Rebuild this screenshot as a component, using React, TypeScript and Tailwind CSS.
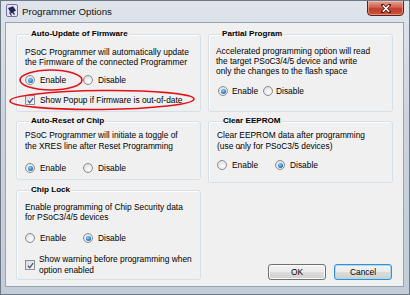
import React from "react";

const FONT = "font-['Liberation_Sans',Arial,sans-serif]";

function Radio({ checked }: { checked?: boolean }) {
    return (
        <span className="flex h-[10px] w-[10px] shrink-0 items-center justify-center rounded-full border border-[#8c8c8c] bg-[radial-gradient(circle_at_60%_65%,#fdfdfd,#e2e2e2_70%,#cfcfcf)]">
            {checked && (
                <span className="h-[5px] w-[5px] rounded-full bg-[radial-gradient(circle_at_40%_35%,#8fd3fb,#2b82cf_55%,#124b8c)]" />
            )}
        </span>
    );
}

function Check() {
    return (
        <span className="flex h-[10px] w-[10px] shrink-0 items-center justify-center border border-[#8e8f8f] bg-[linear-gradient(135deg,#d8d8d8,#f7f7f7)]">
            <svg viewBox="0 0 8 8" className="h-[7px] w-[7px]">
                <path d="M1 4.2 L3.1 6.6 L7 1.2" stroke="#3b4f91" strokeWidth="1.4" fill="none" />
            </svg>
        </span>
    );
}

function Option({ checked, label, width }: { checked?: boolean; label: string; width: string }) {
    return (
        <div className={`flex items-center gap-[5px] ${width}`}>
            <Radio checked={checked} />
            <span>{label}</span>
        </div>
    );
}

function Group({ title, className, children }: { title: string; className: string; children: React.ReactNode }) {
    return (
        <div className={`flex flex-col rounded-[3px] border border-[#d5dfe5] shadow-[inset_1px_1px_0_#ffffff] ${className}`}>
            <div className="-mt-[6px] ml-[5px] w-fit bg-[#f0f0f0] px-[1px] text-[8.1px] font-bold leading-[10px]">{title}</div>
            {children}
        </div>
    );
}

export default function App() {
    return (
        <div className={`relative flex h-[295px] w-[410px] flex-col overflow-hidden border border-[#6c7a88] bg-[linear-gradient(#dfe5eb,#cbd4dd_40%,#c3cdd7)] text-[8.4px] text-black ${FONT}`}>
            {/* Title bar */}
            <div className="flex h-[21px] shrink-0 items-start">
                <svg width="12" height="13" viewBox="0 0 12 13" className="ml-[5px] mt-[3px]">
                    <rect x="0.5" y="0.5" width="11" height="12" rx="1.5" fill="#e6e3f4" stroke="#77729f" />
                    <path d="M2 4 L7 2.2 L10 6.5 L5 9.5 Z" fill="#1f2650" />
                    <path d="M3.5 8.5 L5.5 11.5 M6 7.5 L8.5 10.5" stroke="#1f2650" strokeWidth="1.2" />
                </svg>
                <span className="ml-[4px] mt-[5px] text-[9.7px] leading-[12px] text-[#111]">Programmer Options</span>
                <div className="ml-auto mr-[5px] -mt-px flex h-[16px] w-[37px] items-center justify-center rounded-b-[4px] border border-[#5e2019] bg-[linear-gradient(#e3a496,#d0604c_45%,#c23d29_55%,#c9543c)] shadow-[inset_0_0_0_1px_rgba(255,220,210,0.45)]">
                    <svg width="10" height="9" viewBox="0 0 10 9">
                        <path d="M1.5 1 L8.5 8 M8.5 1 L1.5 8" stroke="#4b1510" strokeWidth="3" strokeLinecap="square" />
                        <path d="M1.8 1.3 L8.2 7.7 M8.2 1.3 L1.8 7.7" stroke="#ffffff" strokeWidth="1.6" />
                    </svg>
                </div>
            </div>

            {/* Client area */}
            <div className="ml-[4px] mr-[5px] mb-[7px] flex flex-1 gap-[7px] border border-[#97a4b1] bg-[#f0f0f0] px-[10px] pt-[11px] pb-[6px]">
                {/* Left column */}
                <div className="flex w-[185px] flex-col">
                    <Group title="Auto-Update of Firmware" className="h-[78px] pl-[8px]">
                        <p className="mt-[8px] leading-[10px]">
                            PSoC Programmer will automatically update<br />
                            the Firmware of the connected Programmer
                        </p>
                        <div className="mt-[8px] flex h-[10px] items-center">
                            <Option checked label="Enable" width="w-[58px]" />
                            <Option label="Disable" width="" />
                        </div>
                        <div className="mt-[10px] flex h-[10px] items-center gap-[5px]">
                            <Check />
                            <span>Show Popup if Firmware is out-of-date</span>
                        </div>
                    </Group>

                    <Group title="Auto-Reset of Chip" className="mt-[9px] h-[59px] pl-[8px]">
                        <p className="mt-[4px] leading-[11px]">
                            PSoC Programmer will initiate a toggle of<br />
                            the XRES line after Reset Programming
                        </p>
                        <div className="mt-[11px] flex h-[10px] items-center">
                            <Option checked label="Enable" width="w-[58px]" />
                            <Option label="Disable" width="" />
                        </div>
                    </Group>

                    <Group title="Chip Lock" className="mt-[10px] h-[90px] pl-[8px]">
                        <p className="mt-[7px] leading-[10px]">
                            Enable programming of Chip Security data<br />
                            for PSoC3/4/5 devices
                        </p>
                        <div className="mt-[11px] flex h-[10px] items-center">
                            <Option label="Enable" width="w-[58px]" />
                            <Option checked label="Disable" width="" />
                        </div>
                        <div className="mt-[11px] flex items-center gap-[4px]">
                            <Check />
                            <span className="leading-[11px]">
                                Show warning before programming when<br />
                                option enabled
                            </span>
                        </div>
                    </Group>
                </div>

                {/* Right column */}
                <div className="flex w-[185px] flex-col">
                    <Group title="Partial Program" className="h-[78px] pl-[7px]">
                        <p className="mt-[7px] leading-[10px]">
                            Accelerated programming option will read<br />
                            the target PSoC3/4/5 device and write<br />
                            only the changes to the flash space
                        </p>
                        <div className="mt-[10px] ml-[2px] flex h-[10px] items-center">
                            <div className="flex w-[45px] items-center gap-[4px]">
                                <Radio checked />
                                <span>Enable</span>
                            </div>
                            <div className="flex items-center gap-[3px]">
                                <Radio />
                                <span>Disable</span>
                            </div>
                        </div>
                    </Group>

                    <Group title="Clear EEPROM" className="mt-[9px] h-[62px] pl-[8px]">
                        <p className="mt-[4px] leading-[11px]">
                            Clear EEPROM data after programming<br />
                            (use only for PSoC3/5 devices)
                        </p>
                        <div className="mt-[8px] flex h-[10px] items-center">
                            <div className="flex w-[58px] items-center gap-[5px]">
                                <Radio />
                                <span>Enable</span>
                            </div>
                            <Option checked label="Disable" width="" />
                        </div>
                    </Group>

                    <div className="mt-auto mr-[1px] flex justify-end gap-[8px]">
                        <button className="h-[16px] w-[58px] rounded-[3px] border border-[#707070] bg-[linear-gradient(#f2f2f2,#ebebeb_50%,#dddddd_50%,#cfcfcf)] leading-none shadow-[inset_0_0_0_1px_#fbfbfb]">
                            OK
                        </button>
                        <button className="h-[16px] w-[58px] rounded-[3px] border border-[#3c8fc4] bg-[linear-gradient(#f2f2f2,#ebebeb_50%,#dddddd_50%,#cfcfcf)] leading-none shadow-[inset_0_0_0_1px_#9fdcf8]">
                            Cancel
                        </button>
                    </div>
                </div>
            </div>

            {/* Red annotation marks drawn over the dialog */}
            <svg className="pointer-events-none absolute left-0 top-0" width="410" height="295" viewBox="0 0 410 295">
                <ellipse cx="50" cy="79" rx="31" ry="10" fill="none" stroke="#e3121a" strokeWidth="1.6" />
                <ellipse cx="101" cy="99" rx="92" ry="9.5" fill="none" stroke="#e3121a" strokeWidth="1.6" transform="rotate(-0.6 101 99)" />
                <circle cx="239" cy="147" r="1.2" fill="#e3121a" />
            </svg>
        </div>
    );
}
